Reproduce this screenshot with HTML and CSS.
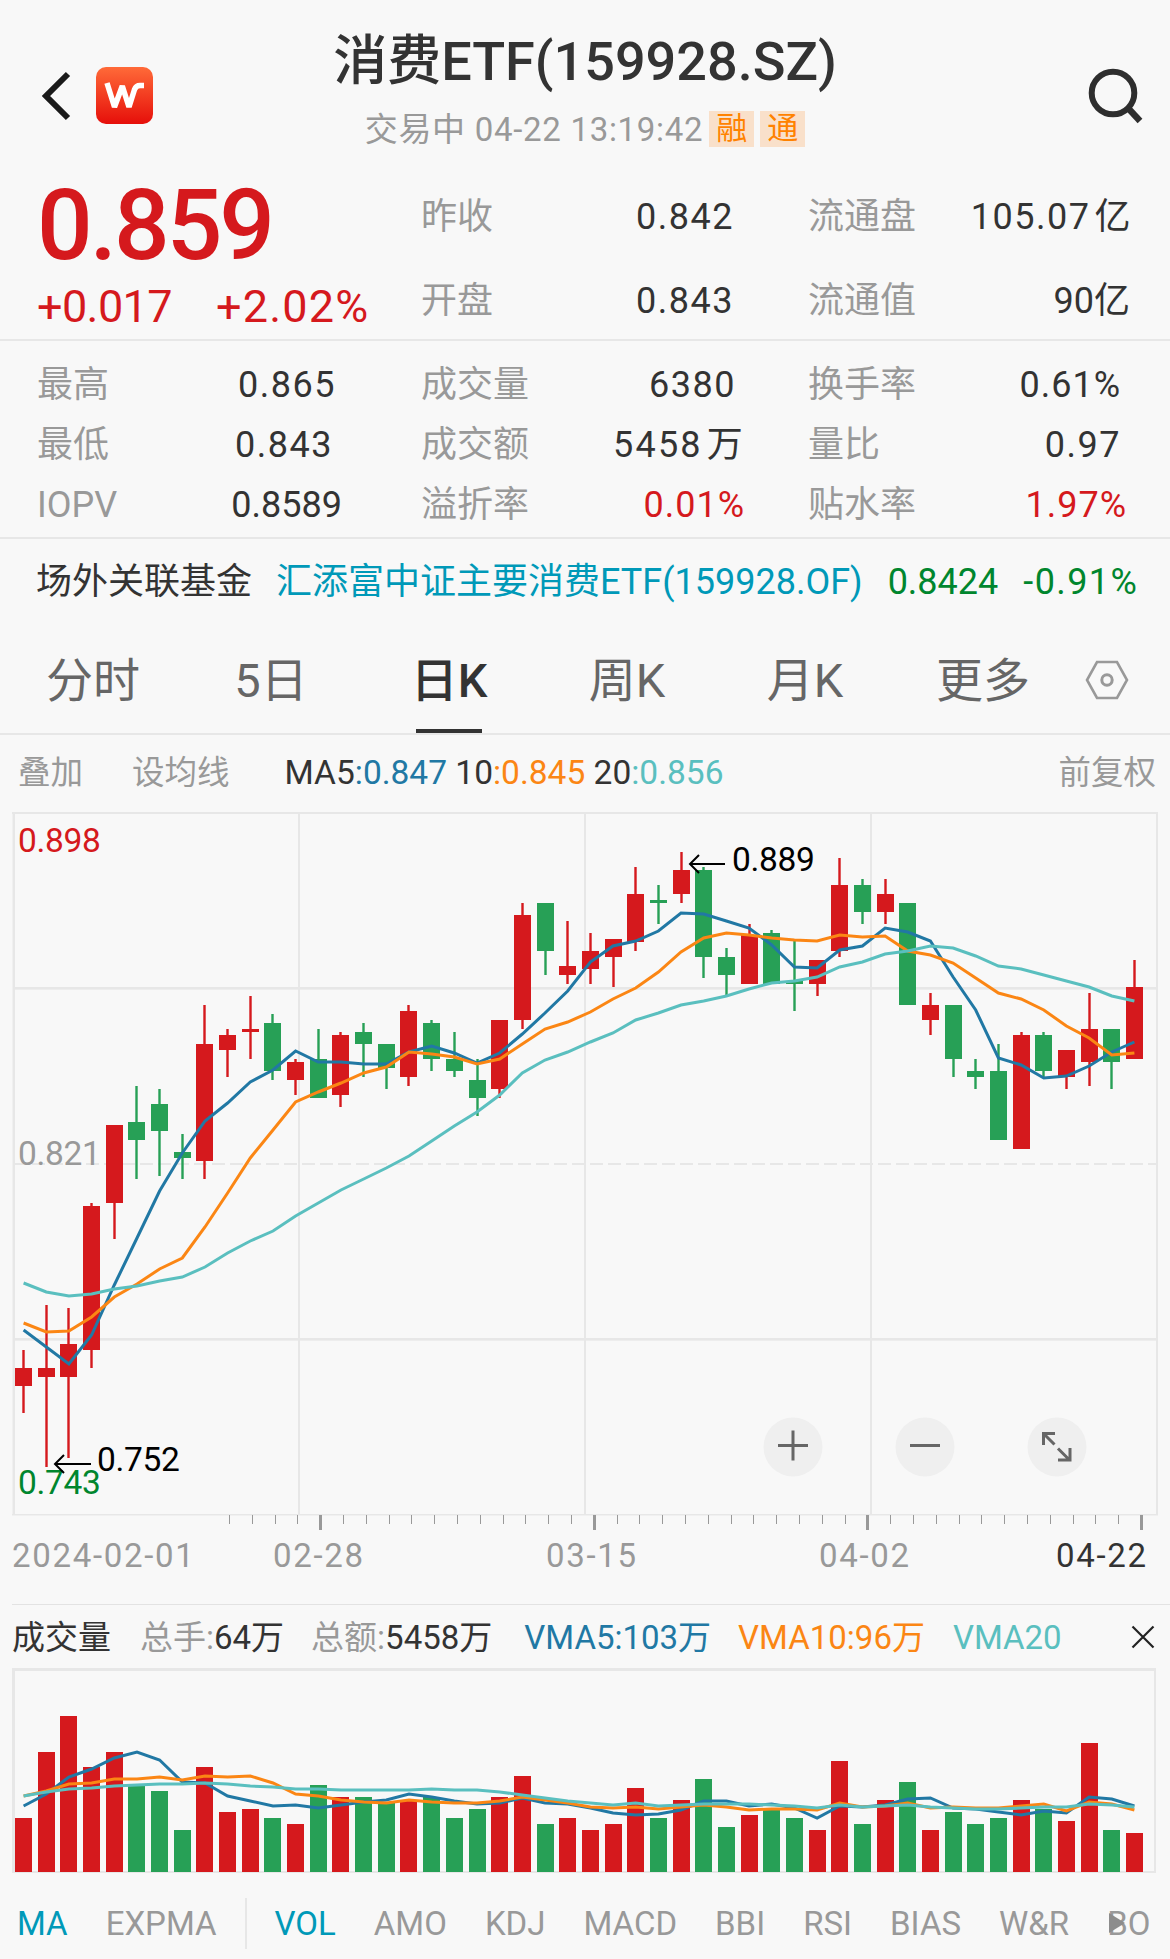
FILE: index.html
```html
<!DOCTYPE html>
<html lang="zh-CN">
<head>
  <meta charset="UTF-8">
  <meta name="viewport" content="width=device-width, initial-scale=1.0">
  <title>消费ETF(159928.SZ)</title>
  <link rel="stylesheet" href="styles.css">
</head>
<body>

  <!-- Header -->
  <header class="header">
    <div class="header-left">
      <svg class="back-icon" width="34" height="54" viewBox="0 0 34 54"><path d="M29 5 L7 27 L29 49" fill="none" stroke="#1a1a1a" stroke-width="6"/></svg>
      <svg class="logo" width="57" height="57" viewBox="0 0 57 57">
        <defs>
          <linearGradient id="logoFill" x1="0" y1="0" x2="0" y2="1">
            <stop offset="0" stop-color="#ff6a38"/>
            <stop offset="1" stop-color="#e60f0a"/>
          </linearGradient>
        </defs>
        <rect width="57" height="57" rx="10" fill="url(#logoFill)"/>
        <path d="M11 16 L18.500 40 L26.300 19 L33 40 L38.500 22.500 Q40 18.500 44 18.500 H48" fill="none" stroke="#fff" stroke-width="5.500" stroke-linejoin="bevel"/>
      </svg>
    </div>
    <div class="header-title">
      <h1>消费ETF(159928.SZ)</h1>
      <div class="status">
        <span>交易中 04-22 13:19:42</span>
        <span class="tag">融</span>
        <span class="tag">通</span>
      </div>
    </div>
    <svg class="search-icon" width="60" height="62" viewBox="0 0 60 62">
      <circle cx="27" cy="28" r="21.300" fill="none" stroke="#2e2e2e" stroke-width="6"/>
      <path d="M42 43 L54 56" stroke="#2e2e2e" stroke-width="6.500"/>
    </svg>
  </header>

  <!-- Quote -->
  <section class="quote">
    <div class="price-box">
      <div class="price">0.859</div>
      <div class="change"><span>+0.017</span><span class="change-pct">+2.02%</span></div>
    </div>
    <div class="cell"><span class="label">昨收</span><span class="value end-b">0.842</span></div>
    <div class="cell"><span class="label">流通盘</span><span class="value end-d">105.07<i>亿</i></span></div>
    <div class="cell"><span class="label">开盘</span><span class="value end-b">0.843</span></div>
    <div class="cell"><span class="label">流通值</span><span class="value tight end-d2">90亿</span></div>
  </section>

  <!-- Detail stats -->
  <section class="stats">
    <div class="cell"><span class="label">最高</span><span class="value end-a">0.865</span></div>
    <div class="cell"><span class="label">成交量</span><span class="value end-b2">6380</span></div>
    <div class="cell"><span class="label">换手率</span><span class="value pct end-e">0.61%</span></div>
    <div class="cell"><span class="label">最低</span><span class="value end-a2">0.843</span></div>
    <div class="cell"><span class="label">成交额</span><span class="value wide end-c">5458<i>万</i></span></div>
    <div class="cell"><span class="label">量比</span><span class="value end-e">0.97</span></div>
    <div class="cell"><span class="label">IOPV</span><span class="value tight end-a3">0.8589</span></div>
    <div class="cell"><span class="label">溢折率</span><span class="value pct red end-c">0.01%</span></div>
    <div class="cell"><span class="label">贴水率</span><span class="value pct red end-f">1.97%</span></div>
  </section>

  <!-- Linked fund -->
  <section class="fund">
    <span>场外关联基金</span>
    <a class="fund-link">汇添富中证主要消费ETF(159928.OF)</a>
    <span class="green">0.8424</span>
    <span class="green drop">-0.91%</span>
  </section>

  <!-- Period tabs -->
  <nav class="periods">
    <span>分时</span>
    <span>5日</span>
    <span class="active"><b>日K</b></span>
    <span>周K</span>
    <span>月K</span>
    <span>更多</span>
    <svg width="44" height="40" viewBox="0 0 44 40" fill="none" stroke="#999" stroke-width="2.600">
      <path d="M12 2 H32 L42 20 L32 38 H12 L2 20 Z"/>
      <circle cx="22" cy="20" r="5.200" stroke-width="3"/>
    </svg>
  </nav>

  <!-- Moving average bar -->
  <div class="ma-bar">
    <span class="overlay">叠加</span>
    <span class="set-ma">设均线</span>
    <span class="ma-values"><em>MA5</em><span class="blue">:0.847</span> <em>10</em><span class="orange">:0.845</span> <em>20</em><span class="teal">:0.856</span></span>
    <span class="adjust">前复权</span>
  </div>

  <!-- Candlestick chart -->
  <svg id="kline" class="kline" width="1170" height="725" viewBox="0 810 1170 725"></svg>

  <div class="dates">
    <span>2024-02-01</span>
    <span>02-28</span>
    <span>03-15</span>
    <span>04-02</span>
    <span class="today">04-22</span>
  </div>

  <!-- Volume -->
  <div class="vol-bar">
    <span class="vol-name">成交量</span>
    <span class="vol-total"><em>总手:</em>64万</span>
    <span class="vol-amount"><em>总额:</em>5458万</span>
    <span class="vma5 blue">VMA5:103万</span>
    <span class="vma10 orange">VMA10:96万</span>
    <span class="vma20 teal">VMA20</span>
    <svg class="close" width="24" height="24" viewBox="0 0 24 24"><path d="M1.500 1.500 L22.500 22.500 M22.500 1.500 L1.500 22.500" stroke="#222" stroke-width="2.200"/></svg>
  </div>
  <svg id="volume" class="volume" width="1170" height="210" viewBox="0 1666 1170 210"></svg>

  <!-- Indicators -->
  <nav class="indicators">
    <span class="on">MA</span>
    <span>EXPMA</span>
    <i class="split"></i>
    <span class="on">VOL</span>
    <span>AMO</span>
    <span>KDJ</span>
    <span>MACD</span>
    <span>BBI</span>
    <span>RSI</span>
    <span>BIAS</span>
    <span>W&amp;R</span>
    <span class="more">BO</span>
  </nav>

  <script>
    const RED = '#d5191d', GREEN = '#27a056';
    const BLUE = '#2178a4', ORANGE = '#fb8614', TEAL = '#5abfbf';
    const STEP = 22.67, START = 23.6;
    const xAt = i => START + i * STEP;

    // [color, body top, body bottom, wick top, wick bottom]
    const candles = [
      ['r',1368,1386,1350,1413],['r',1368,1377,1305,1467],['r',1344,1377,1308,1458],['r',1206,1350,1203,1368],
      ['r',1125,1203,1125,1239],['g',1122,1140,1086,1179],['g',1104,1131,1089,1176],['g',1152,1158,1134,1179],
      ['r',1044,1161,1005,1179],['r',1035,1050,1029,1077],['r',1029,1032,996,1059],['g',1023,1071,1014,1080],
      ['r',1062,1080,1059,1095],['g',1059,1098,1029,1098],['r',1035,1095,1032,1107],['g',1032,1044,1023,1077],
      ['g',1044,1068,1044,1089],['r',1011,1077,1005,1086],['g',1023,1059,1020,1071],['g',1059,1071,1032,1077],
      ['g',1080,1098,1059,1116],['r',1020,1089,1020,1098],['r',915,1020,903,1029],['g',903,951,903,975],
      ['r',966,975,921,984],['r',951,969,933,984],['r',939,957,939,987],['r',894,942,867,951],
      ['g',900,903,885,924],['r',870,894,852,903],['g',870,957,867,978],['g',957,975,948,995],
      ['r',935,984,924,984],['g',933,984,930,984],['g',981,984,941,1011],['r',960,984,960,996],
      ['r',885,951,858,957],['g',885,912,879,924],['r',894,912,879,924],['g',903,1005,903,1005],
      ['r',1005,1020,993,1035],['g',1005,1059,1005,1077],['g',1071,1077,1059,1089],['g',1071,1140,1044,1140],
      ['r',1035,1149,1032,1149],['g',1035,1071,1032,1077],['r',1050,1077,1050,1089],['r',1029,1062,993,1086],
      ['g',1029,1062,1029,1089],['r',987,1059,960,1059]
    ];
    const ma5 = [1330,1347,1364,1335,1285,1238,1191,1153,1121,1103,1082,1070,1051,1062,1062,1064,1064,1052,1046,1053,1063,1053,1034,1013,991,962,946,941,931,913,914,921,928,945,967,968,950,946,928,932,941,977,1010,1058,1065,1078,1076,1066,1052,1042];
    const ma10 = [1323,1332,1331,1317,1297,1284,1269,1258,1227,1193,1158,1130,1102,1092,1083,1073,1067,1052,1054,1057,1064,1059,1044,1029,1022,1012,999,988,972,952,938,933,935,938,940,941,935,937,936,951,955,963,978,993,999,1010,1026,1038,1055,1053];
    const ma20 = [1283,1292,1296,1294,1289,1286,1281,1277,1267,1253,1241,1231,1216,1203,1190,1179,1168,1156,1141,1126,1112,1095,1073,1060,1052,1042,1033,1020,1013,1005,1001,996,989,983,981,977,967,962,954,951,946,948,956,966,969,975,981,987,996,1001];

    const volTops = [1818,1752,1716,1767,1752,1786,1791,1830,1767,1812,1809,1818,1824,1785,1797,1797,1803,1801,1797,1818,1809,1797,1776,1824,1818,1830,1824,1788,1818,1800,1779,1827,1815,1810,1818,1830,1761,1824,1800,1782,1830,1812,1824,1818,1800,1809,1821,1743,1830,1833];
    const vma5 = [1806,1794,1777,1769,1758,1752,1760,1782,1783,1796,1801,1806,1805,1808,1805,1802,1800,1794,1797,1801,1804,1803,1798,1803,1804,1808,1813,1815,1814,1810,1801,1801,1806,1804,1808,1818,1806,1807,1805,1799,1798,1808,1809,1812,1815,1811,1813,1797,1799,1806];
    const vma10 = [1796,1791,1784,1783,1779,1779,1777,1780,1776,1777,1776,1783,1794,1796,1800,1802,1803,1800,1802,1803,1803,1801,1797,1800,1803,1807,1808,1807,1809,1807,1805,1807,1810,1809,1809,1810,1803,1807,1806,1803,1808,1807,1808,1808,1806,1804,1811,1802,1804,1810];
    const vma20 = [1796,1792,1789,1788,1786,1785,1784,1784,1783,1784,1786,1787,1789,1789,1790,1790,1790,1790,1789,1790,1790,1792,1795,1798,1801,1803,1805,1803,1806,1805,1804,1804,1804,1805,1806,1808,1805,1807,1806,1805,1807,1808,1809,1809,1808,1807,1807,1804,1805,1807];

    const rect = (x, y, w, h, fill) => `<rect x="${x}" y="${y}" width="${w}" height="${h}" fill="${fill}"/>`;
    const line = (data, color) =>
      `<polyline fill="none" stroke="${color}" stroke-width="3" points="${data.map((y, i) => xAt(i).toFixed(1) + ',' + y).join(' ')}"/>`;

    // K line
    let k = '';
    const grid = '#e7e7e7';
    k += rect(12, 812, 1146, 2, grid) + rect(12, 1514, 1146, 1.5, grid);
    k += rect(12.5, 812, 2.5, 703, grid) + rect(1156, 812, 2, 703, grid);
    k += rect(13, 987, 1144, 2.6, grid) + rect(13, 1338, 1144, 2.6, grid);
    [298, 584, 870].forEach(x => k += rect(x, 813, 2, 702, grid));
    k += `<path d="M14 1164 H1157" stroke="${grid}" stroke-width="2" stroke-dasharray="13 5"/>`;
    k += '<text x="18" y="852" class="axis" fill="#d5191d">0.898</text>';
    k += '<text x="18" y="1165" class="axis" fill="#999">0.821</text>';

    // Date ticks, a thick one above each date
    for (let i = 0; i <= 40; i++) {
      const x = Math.round(229 + i * 22.8);
      k += i % 12 === 4 ? rect(x - 1, 1515, 3, 15, '#999') : rect(x, 1515, 1, 9, '#999');
    }

    candles.forEach(([c, top, bottom, high, low], i) => {
      const color = c === 'r' ? RED : GREEN;
      const x = Math.round(xAt(i) - 8.5);
      k += rect(x + 7.3, high, 2.4, low - high, color);
      k += rect(x, top, 17, bottom - top, color);
    });
    k += line(ma5, BLUE) + line(ma10, ORANGE) + line(ma20, TEAL);

    // High / low marks
    k += '<text x="18" y="1494" class="axis" fill="#00862e">0.743</text>';
    k += '<path class="arrow" d="M725 864 H690 M699 855 L690 864 L699 873"/><text x="732" y="871" class="axis" fill="#000">0.889</text>';
    k += '<path class="arrow" d="M91 1464 H55 M64 1455 L55 1464 L64 1473"/><text x="97" y="1471" class="axis" fill="#000">0.752</text>';

    // Zoom buttons
    [793, 925, 1057].forEach(x => k += `<circle cx="${x}" cy="1447" r="29.5" fill="#efefef"/>`);
    k += '<path class="btn" d="M778 1445.500 H808 M793 1430.500 V1460.500 M910 1445.500 H940"/>';
    k += '<path class="btn" d="M1043.500 1445 V1433.500 H1055 M1044 1434 L1054.500 1444.500 M1058 1448.500 L1069 1459.500 M1070 1448 V1460 H1058"/>';
    document.getElementById('kline').innerHTML = k;

    // Volume bars
    let v = rect(12, 1668, 1144, 3, grid) + rect(12, 1668, 3, 204, grid);
    v += rect(1154, 1668, 2, 205, grid) + rect(12, 1871, 1144, 2, grid);
    volTops.forEach((top, i) => {
      v += rect(Math.round(xAt(i) - 8.5), top, 17, 1872 - top, candles[i][0] === 'r' ? RED : GREEN);
    });
    v += line(vma5, BLUE) + line(vma10, ORANGE) + line(vma20, TEAL);
    document.getElementById('volume').innerHTML = v;
  </script>

</body>
</html>
```
FILE: styles.css
```css
* {
  margin: 0;
  padding: 0;
  box-sizing: border-box;
}

body {
  width: 1170px;
  height: 1959px;
  background: #f8f8f8;
  color: #333;
  font-family: Roboto, "Noto Sans CJK SC", sans-serif;
  font-size: 36px;
  line-height: 1;
  overflow: hidden;
  white-space: nowrap;
}

em,
i {
  font-style: normal;
}

svg {
  display: block;
}

/* Colors */
.red { color: #d5191d; }
.green { color: #00862e; }
.blue { color: #2178a4; }
.orange { color: #fb8614; }
.teal { color: #5abfbf; }

/* Header */
.header {
  display: grid;
  grid-template-columns: 300px 570px 300px;
  height: 180px;
}

.header-left {
  display: flex;
  align-items: center;
  height: 57px;
  margin-top: 67px;
  padding-left: 39px;
  gap: 23px;
}

.header-title {
  display: flex;
  flex-direction: column;
  align-items: center;
}

.header-title h1 {
  height: 72px;
  margin-top: 26px;
  line-height: 72px;
  font-size: 54px;
  font-weight: 500;
}

.status {
  display: flex;
  align-items: center;
  height: 36px;
  margin-top: 13px;
  color: #999;
  font-size: 33px;
  letter-spacing: 0.7px;
}

.tag {
  width: 45px;
  height: 36px;
  margin-left: 6px;
  background: #f9e0ca;
  color: #ff8200;
  font-size: 31px;
  line-height: 36px;
  letter-spacing: 0;
  text-align: center;
}

.search-icon {
  justify-self: end;
  margin: 65px 24px 0 0;
}

/* Quote */
.quote {
  display: grid;
  grid-template-columns: 384px 387px 362px;
  grid-template-rows: 84px 84px;
  height: 161px;
  padding-left: 37px;
  border-bottom: 2px solid #e7e7e7;
}

.price-box {
  grid-row: 1 / 3;
  color: #d5191d;
}

.price {
  height: 90px;
  line-height: 92px;
  font-size: 98px;
  font-weight: 500;
  letter-spacing: -3px;
}

.change {
  display: flex;
  gap: 44px;
  margin-top: 14px;
  font-size: 45px;
  letter-spacing: -0.6px;
}

.change-pct {
  letter-spacing: 1.2px;
}

.cell {
  display: flex;
  align-items: center;
  justify-content: space-between;
}

.quote .cell {
  height: 73px;
}

.label {
  color: #999;
}

.value {
  letter-spacing: 1.5px;
}

.value i {
  margin-left: 4px;
}

.tight { letter-spacing: 0; }
.pct { letter-spacing: 1px; }
.wide { letter-spacing: 2.2px; }

/* Right edge of the values */
.end-a { margin-right: 85px; }
.end-a2 { margin-right: 88px; }
.end-a3 { margin-right: 79px; }
.end-b { margin-right: 74px; }
.end-b2 { margin-right: 72px; }
.end-c { margin-right: 63px; }
.end-d { margin-right: 38px; }
.end-d2 { margin-right: 40px; }
.end-e { margin-right: 49px; }
.end-f { margin-right: 43px; }

/* Stats */
.stats {
  display: grid;
  grid-template-columns: 384px 387px 362px;
  grid-template-rows: repeat(3, 60px);
  height: 198px;
  padding: 14px 0 0 37px;
  border-bottom: 2px solid #e7e7e7;
}

/* Linked fund */
.fund {
  display: flex;
  align-items: center;
  height: 84px;
  padding: 1px 0 0 36px;
}

.fund-link {
  margin: 0 25px 0 24px;
  color: #0099b8;
}

.drop {
  margin-left: 25px;
  letter-spacing: 1.4px;
}

/* Period tabs */
.periods {
  display: grid;
  grid-template-columns: repeat(6, 178px) 60px;
  height: 112px;
  padding-left: 4px;
  border-bottom: 2px solid #e7e7e7;
  color: #666;
  font-size: 47px;
}

.periods span {
  height: 110px;
  line-height: 116px;
  text-align: center;
}

.periods .active {
  color: #333;
}

.active b {
  font-weight: 500;
}

.active::after {
  content: "";
  display: block;
  width: 66px;
  height: 4px;
  margin: -10px auto 0;
  background: #333;
}

.periods svg {
  margin: 37px 0 0 13px;
}

/* Moving average bar */
.ma-bar {
  display: flex;
  align-items: center;
  height: 75px;
  padding: 1px 14px 0 18px;
  color: #999;
  font-size: 32.5px;
}

.set-ma {
  margin-left: 49px;
}

.ma-values {
  margin-left: 55px;
  font-size: 33.5px;
}

.ma-values em {
  color: #333;
}

.adjust {
  margin-left: auto;
}

/* Charts */
.kline {
  letter-spacing: -0.3px;
}

.axis {
  font-size: 33.5px;
}

.arrow {
  fill: none;
  stroke: #000;
  stroke-width: 2;
}

.btn {
  fill: none;
  stroke: #666;
  stroke-width: 3;
}

.dates {
  display: grid;
  grid-template-columns: 261px 273px 273px 237px 100px;
  height: 69px;
  padding: 4px 0 0 12px;
  color: #999;
  font-size: 33px;
  letter-spacing: 1.7px;
}

.dates .today {
  color: #333;
}

/* Volume */
.vol-bar {
  display: flex;
  align-items: center;
  height: 62px;
  margin-left: 12px;
  padding-top: 3px;
  border-top: 1px solid #e3e3e3;
  font-size: 33px;
}

.vol-bar em {
  color: #999;
}

.vol-total { margin-left: 29px; }
.vol-amount { margin-left: 27px; }
.vma5 { margin-left: 32px; }
.vma10 { margin-left: 27px; }
.vma20 { margin-left: 28px; }

.close {
  margin: 0 15px 0 auto;
}

/* Indicators */
.indicators {
  display: flex;
  align-items: center;
  height: 83px;
  padding: 12px 0 0 17px;
  gap: 38px;
  color: #999;
  font-size: 33px;
}

.indicators .on {
  color: #0099b8;
}

.indicators .split {
  width: 2px;
  height: 51px;
  margin: 0 -10px;
  background: #e7e7e7;
}

.more {
  position: relative;
  width: 42px;
}

.more::before {
  content: "";
  position: absolute;
  left: 2px;
  top: 6px;
  border-left: 16px solid #8c8c8c;
  border-top: 10px solid transparent;
  border-bottom: 10px solid transparent;
}
```
